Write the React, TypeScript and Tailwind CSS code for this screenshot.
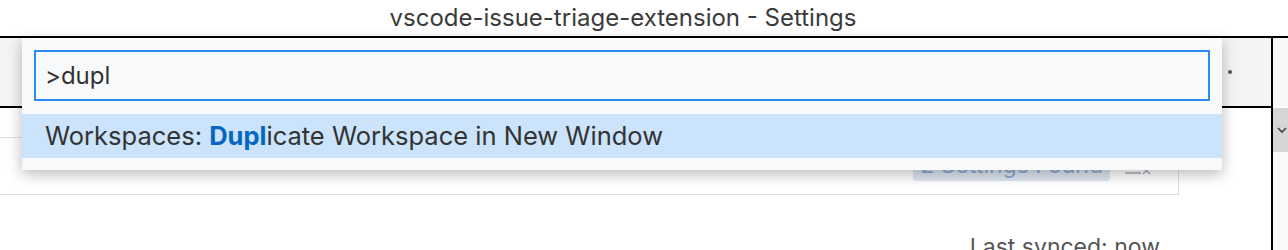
import React from "react";

export default function App() {
  const font = { fontFamily: "Inter, 'Noto Sans', sans-serif" };
  return (
    <div className="relative w-[1288px] h-[250px] overflow-hidden bg-white text-[#333]" style={font}>
      <div className="h-[36px] flex items-center justify-center text-[24px] text-[#3a3a3a] bg-white pb-[1px] pr-[42px]">
        vscode-issue-triage-extension - Settings
      </div>
      <div className="h-[2px] bg-black" />
      <div className="flex h-[212px]">
        <div className="w-[1271px] flex flex-col">
          <div className="h-[68px] shrink-0 bg-[#f3f4f6] flex items-center justify-end pr-[39px]">
            <div className="w-[4px] h-[4px] rounded-full bg-[#555]" />
          </div>
          <div className="h-[2px] shrink-0 bg-black" />
          <div className="flex-1 min-h-0 overflow-hidden bg-white flex flex-col">
            <div className="h-[29px] shrink-0" />
            <div className="w-[1179px] h-[58px] shrink-0 border-t border-r border-b border-[#dcdfe4] flex items-start justify-end pr-[26px] gap-[14px]">
              <div className="mt-[14px] h-[29px] px-[7px] rounded-[3px] bg-[#dde6f1] text-[#8eaad4] text-[23px] leading-[27px] whitespace-nowrap">
                2 Settings Found
              </div>
              <svg width="28" height="18" viewBox="0 0 28 18" className="mt-[20px]">
                <path d="M1 5h16M1 10h16M1 15h16" stroke="#a8aeb8" strokeWidth="1.5" />
                <path d="M19 9l7 7M26 9l-7 7" stroke="#a8aeb8" strokeWidth="1.5" />
              </svg>
            </div>
            <div className="mt-[41px] shrink-0 flex justify-end pr-[111px]">
              <div className="text-[23px] text-[#555] leading-[23px] whitespace-nowrap">Last synced: now</div>
            </div>
          </div>
        </div>
        <div className="w-[2px] shrink-0 bg-black" />
        <div className="flex-1 flex flex-col">
          <div className="h-[68px] shrink-0 bg-[#f8f8f9]" />
          <div className="h-[2px] shrink-0" />
          <div className="h-[44px] shrink-0 bg-[#d6d6d6] flex items-center justify-end pr-[1px]">
            <svg width="10" height="8" viewBox="0 0 10 8">
              <path d="M1 2l4 4 4-4" stroke="#444" strokeWidth="1.6" fill="none" />
            </svg>
          </div>
          <div className="flex-1 bg-[#f8f9fa]" />
        </div>
      </div>
      <div className="absolute left-[22px] top-[38px] w-[1200px] h-[132px] bg-[#f8f9fb] shadow-[0_4px_14px_rgba(0,0,0,0.28)] flex flex-col pt-[12px]">
        <div className="mx-[12px] h-[51px] shrink-0 border-2 border-[#2a8cf2] flex items-center pl-[9px] text-[24px] text-[#333]">
          &gt;dupl
        </div>
        <div className="mt-[13px] h-[44px] shrink-0 bg-[#cbe4fb] flex items-center pl-[23px] text-[25.5px] text-[#333] whitespace-nowrap">
          <span>Workspaces:&nbsp;</span>
          <span className="font-bold text-[#0566c2]">Dupl</span>
          <span>icate Workspace in New Window</span>
        </div>
      </div>
    </div>
  );
}
